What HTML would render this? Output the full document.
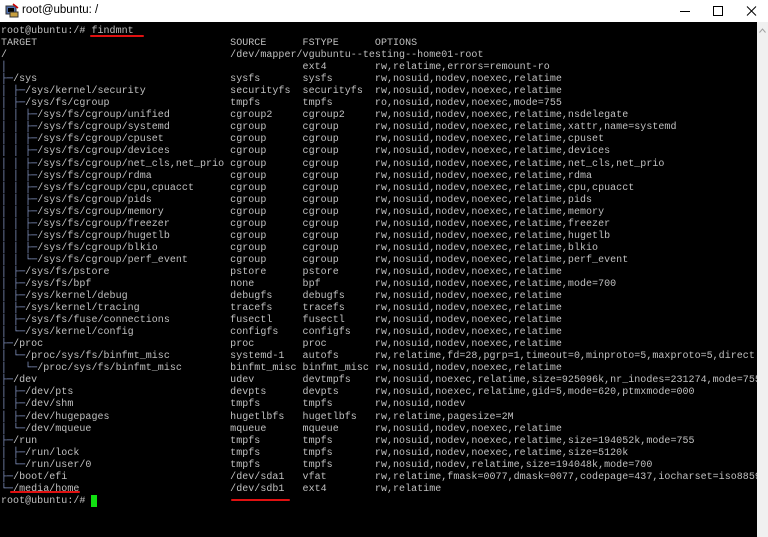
<!DOCTYPE html>
<html><head><meta charset="utf-8"><style>
html,body{margin:0;padding:0;width:768px;height:537px;overflow:hidden;background:#fff;}
.tb{position:absolute;left:0;top:0;width:768px;height:22px;background:#fff;font-family:"Liberation Sans",sans-serif;font-size:11.5px;color:#000;}
.tb .t{position:absolute;left:22px;top:4px;}
.term{position:absolute;left:0;top:22px;width:757px;height:515px;background:#000;overflow:hidden;}
.sb{position:absolute;left:757px;top:22px;width:11px;height:515px;background:#f0f0f0;}
pre{margin:0;position:absolute;left:1px;top:4px;font-family:"Liberation Mono","DejaVu Sans Mono",monospace;font-size:10px;letter-spacing:0.03px;line-height:12.05px;color:#c0c0c0;white-space:pre;}
b{font-weight:normal;color:#8a9ccc;}
.u{position:absolute;height:2px;background:#e01010;border-radius:1px;}
.cur{position:absolute;left:91px;width:6px;height:12px;background:#11e011;}
</style></head><body>
<div class="tb">
<svg style="position:absolute;left:5px;top:3px" width="15" height="15" viewBox="0 0 15 15"><rect x="1" y="3" width="10" height="8" fill="#5070b0" stroke="#333" stroke-width="1"/><rect x="3" y="5" width="6" height="4" fill="#000"/><rect x="5" y="9" width="8" height="5" fill="#c8a040" stroke="#333"/><path d="M8 1 L13 5" stroke="#c00" stroke-width="1.5"/></svg>
<span class="t">root@ubuntu: /</span>
<svg style="position:absolute;left:678px;top:5px" width="85" height="12" viewBox="0 0 85 12"><path d="M2 6.5 H12" stroke="#000" stroke-width="1"/><rect x="35.5" y="1.5" width="9" height="9" fill="none" stroke="#000"/><path d="M69 1.5 L78 10.5 M78 1.5 L69 10.5" stroke="#000" stroke-width="1"/></svg>
</div>
<div class="term">
<pre>root@ubuntu:/# findmnt
TARGET                                SOURCE      FSTYPE      OPTIONS
/                                     /dev/mapper/vgubuntu--testing--home01-root
<b>│</b>                                                 ext4        rw,relatime,errors=remount-ro
<b>├─</b>/sys                                sysfs       sysfs       rw,nosuid,nodev,noexec,relatime
<b>│ ├─</b>/sys/kernel/security              securityfs  securityfs  rw,nosuid,nodev,noexec,relatime
<b>│ ├─</b>/sys/fs/cgroup                    tmpfs       tmpfs       ro,nosuid,nodev,noexec,mode=755
<b>│ │ ├─</b>/sys/fs/cgroup/unified          cgroup2     cgroup2     rw,nosuid,nodev,noexec,relatime,nsdelegate
<b>│ │ ├─</b>/sys/fs/cgroup/systemd          cgroup      cgroup      rw,nosuid,nodev,noexec,relatime,xattr,name=systemd
<b>│ │ ├─</b>/sys/fs/cgroup/cpuset           cgroup      cgroup      rw,nosuid,nodev,noexec,relatime,cpuset
<b>│ │ ├─</b>/sys/fs/cgroup/devices          cgroup      cgroup      rw,nosuid,nodev,noexec,relatime,devices
<b>│ │ ├─</b>/sys/fs/cgroup/net_cls,net_prio cgroup      cgroup      rw,nosuid,nodev,noexec,relatime,net_cls,net_prio
<b>│ │ ├─</b>/sys/fs/cgroup/rdma             cgroup      cgroup      rw,nosuid,nodev,noexec,relatime,rdma
<b>│ │ ├─</b>/sys/fs/cgroup/cpu,cpuacct      cgroup      cgroup      rw,nosuid,nodev,noexec,relatime,cpu,cpuacct
<b>│ │ ├─</b>/sys/fs/cgroup/pids             cgroup      cgroup      rw,nosuid,nodev,noexec,relatime,pids
<b>│ │ ├─</b>/sys/fs/cgroup/memory           cgroup      cgroup      rw,nosuid,nodev,noexec,relatime,memory
<b>│ │ ├─</b>/sys/fs/cgroup/freezer          cgroup      cgroup      rw,nosuid,nodev,noexec,relatime,freezer
<b>│ │ ├─</b>/sys/fs/cgroup/hugetlb          cgroup      cgroup      rw,nosuid,nodev,noexec,relatime,hugetlb
<b>│ │ ├─</b>/sys/fs/cgroup/blkio            cgroup      cgroup      rw,nosuid,nodev,noexec,relatime,blkio
<b>│ │ └─</b>/sys/fs/cgroup/perf_event       cgroup      cgroup      rw,nosuid,nodev,noexec,relatime,perf_event
<b>│ ├─</b>/sys/fs/pstore                    pstore      pstore      rw,nosuid,nodev,noexec,relatime
<b>│ ├─</b>/sys/fs/bpf                       none        bpf         rw,nosuid,nodev,noexec,relatime,mode=700
<b>│ ├─</b>/sys/kernel/debug                 debugfs     debugfs     rw,nosuid,nodev,noexec,relatime
<b>│ ├─</b>/sys/kernel/tracing               tracefs     tracefs     rw,nosuid,nodev,noexec,relatime
<b>│ ├─</b>/sys/fs/fuse/connections          fusectl     fusectl     rw,nosuid,nodev,noexec,relatime
<b>│ └─</b>/sys/kernel/config                configfs    configfs    rw,nosuid,nodev,noexec,relatime
<b>├─</b>/proc                               proc        proc        rw,nosuid,nodev,noexec,relatime
<b>│ └─</b>/proc/sys/fs/binfmt_misc          systemd-1   autofs      rw,relatime,fd=28,pgrp=1,timeout=0,minproto=5,maxproto=5,direct
<b>│   └─</b>/proc/sys/fs/binfmt_misc        binfmt_misc binfmt_misc rw,nosuid,nodev,noexec,relatime
<b>├─</b>/dev                                udev        devtmpfs    rw,nosuid,noexec,relatime,size=925096k,nr_inodes=231274,mode=755
<b>│ ├─</b>/dev/pts                          devpts      devpts      rw,nosuid,noexec,relatime,gid=5,mode=620,ptmxmode=000
<b>│ ├─</b>/dev/shm                          tmpfs       tmpfs       rw,nosuid,nodev
<b>│ ├─</b>/dev/hugepages                    hugetlbfs   hugetlbfs   rw,relatime,pagesize=2M
<b>│ └─</b>/dev/mqueue                       mqueue      mqueue      rw,nosuid,nodev,noexec,relatime
<b>├─</b>/run                                tmpfs       tmpfs       rw,nosuid,nodev,noexec,relatime,size=194052k,mode=755
<b>│ ├─</b>/run/lock                         tmpfs       tmpfs       rw,nosuid,nodev,noexec,relatime,size=5120k
<b>│ └─</b>/run/user/0                       tmpfs       tmpfs       rw,nosuid,nodev,relatime,size=194048k,mode=700
<b>├─</b>/boot/efi                           /dev/sda1   vfat        rw,relatime,fmask=0077,dmask=0077,codepage=437,iocharset=iso8859-1
<b>└─</b>/media/home                         /dev/sdb1   ext4        rw,relatime
root@ubuntu:/# </pre>
<div class="u" style="left:90px;top:13px;width:54px;"></div>
<div class="u" style="left:10px;top:469px;width:70px;"></div>
<div class="u" style="left:231px;top:477px;width:59px;"></div>
<div class="cur" style="top:473px"></div>
</div>
<div class="sb"><svg style="position:absolute;left:2px;top:6px" width="7" height="5"><path d="M0.5 4.5 L3.5 1 L6.5 4.5" fill="none" stroke="#a0a0a0"/></svg></div>
</body></html>
